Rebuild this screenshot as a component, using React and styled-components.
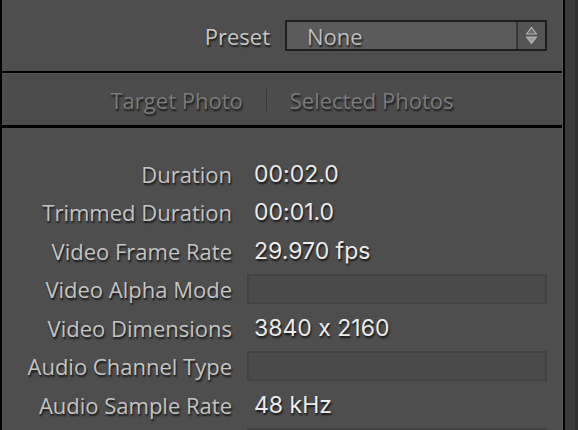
import React from "react";
import styled, { createGlobalStyle } from "styled-components";

const GlobalStyle = createGlobalStyle`
  html, body {
    margin: 0;
    padding: 0;
    background: #2f2f2f;
    overflow: hidden;
  }
`;

// the last row is only partly in view, so its label is left blank
const metadata = [
  { label: "Duration", value: "00:02.0" },
  { label: "Trimmed Duration", value: "00:01.0" },
  { label: "Video Frame Rate", value: "29.970 fps" },
  { label: "Video Alpha Mode", field: true },
  { label: "Video Dimensions", value: "3840 x 2160" },
  { label: "Audio Channel Type", field: true },
  { label: "Audio Sample Rate", value: "48 kHz" },
  { label: "", field: true },
];

const UpDownArrows = () => (
  <svg width="13" height="19" viewBox="0 0 13 19">
    <path d="M6.5 1.5 L11.5 8 H1.5 Z" fill="#6a6a6a" stroke="#b4b4b4" strokeWidth="1.2" strokeLinejoin="round" />
    <path d="M1.5 11 H11.5 L6.5 17.5 Z" fill="#9c9c9c" stroke="#b4b4b4" strokeWidth="1.2" strokeLinejoin="round" />
  </svg>
);

const App = () => {
  return (
    <>
      <GlobalStyle />
      <Frame>
        <Panel>
          <PresetBar>
            <PresetLabel>Preset</PresetLabel>
            <Select>
              <SelectValue>None</SelectValue>
              <SelectStepper>
                <UpDownArrows />
              </SelectStepper>
            </Select>
          </PresetBar>
          <ScopeBar>
            <ScopeOption>Target Photo</ScopeOption>
            <ScopeDivider />
            <ScopeOption>Selected Photos</ScopeOption>
          </ScopeBar>
          <MetaGrid>
            {metadata.map((row, i) => (
              <React.Fragment key={i}>
                <MetaLabel>{row.label}</MetaLabel>
                <MetaCell>
                  {row.field ? <EmptyField /> : <MetaValue>{row.value}</MetaValue>}
                </MetaCell>
              </React.Fragment>
            ))}
          </MetaGrid>
        </Panel>
        <Scrollbar />
      </Frame>
    </>
  );
};

const Frame = styled.div`
  display: flex;
  width: 578px;
  height: 430px;
  overflow: hidden;
  background: #2f2f2f;
`;

const Panel = styled.div`
  width: 560px;
  flex-shrink: 0;
  display: flex;
  flex-direction: column;
  border-left: 2px solid #000;
  border-right: 1px solid #5a5a5a;
  background: #4e4e4e;
  font-family: "Open Sans", "Noto Sans", sans-serif;
`;

const Scrollbar = styled.div`
  width: 10px;
  flex-shrink: 0;
  border-left: 2px solid #000;
  background: #3a3a3a;
`;

const shadowText = `
  text-shadow: 1px 2px 2px rgba(0, 0, 0, 0.75);
`;

const PresetBar = styled.div`
  height: 73px;
  flex-shrink: 0;
  box-sizing: border-box;
  display: flex;
  align-items: center;
  justify-content: flex-end;
  gap: 15px;
  padding: 0 15px 0 0;
  border-bottom: 2px solid #000;
`;

const PresetLabel = styled.span`
  font-size: 22px;
  color: #c6c6c6;
  ${shadowText}
`;

const Select = styled.div`
  width: 262px;
  height: 31px;
  box-sizing: border-box;
  display: flex;
  border: 2px solid #1f1f1f;
  background: #5b5b5b;
`;

const SelectValue = styled.span`
  flex: 1;
  display: flex;
  align-items: center;
  padding-left: 20px;
  font-size: 22px;
  color: #bcbcbc;
  border-right: 2px solid #383838;
  ${shadowText}
`;

const SelectStepper = styled.span`
  width: 27px;
  display: flex;
  align-items: center;
  justify-content: center;
  background: #545454;
`;

const ScopeBar = styled.div`
  height: 55px;
  flex-shrink: 0;
  box-sizing: border-box;
  display: flex;
  align-items: center;
  justify-content: center;
  gap: 23px;
  border-top: 1px solid #575757;
  border-bottom: 3px solid #000;
  background: #4c4c4c;
`;

const ScopeOption = styled.span`
  font-size: 22px;
  color: #7b7b7b;
  ${shadowText}
`;

const ScopeDivider = styled.span`
  width: 1px;
  height: 22px;
  background: #383838;
`;

const MetaGrid = styled.div`
  display: grid;
  grid-template-columns: 230px 300px;
  grid-auto-rows: 38.5px;
  column-gap: 15px;
  padding-top: 26.5px;
`;

const MetaLabel = styled.span`
  display: flex;
  align-items: center;
  justify-content: flex-end;
  font-size: 22px;
  color: #c4c4c4;
  white-space: nowrap;
  ${shadowText}
`;

const MetaCell = styled.div`
  display: flex;
  align-items: center;
`;

const MetaValue = styled.span`
  padding-left: 7px;
  font-family: Inter, "Liberation Sans", sans-serif;
  font-feature-settings: "calt" 0;
  font-size: 23px;
  color: #ebebeb;
  ${shadowText}
`;

const EmptyField = styled.div`
  width: 100%;
  height: 30px;
  box-sizing: border-box;
  border: 2px solid #424242;
  background: #4a4a4a;
`;

export default App;
